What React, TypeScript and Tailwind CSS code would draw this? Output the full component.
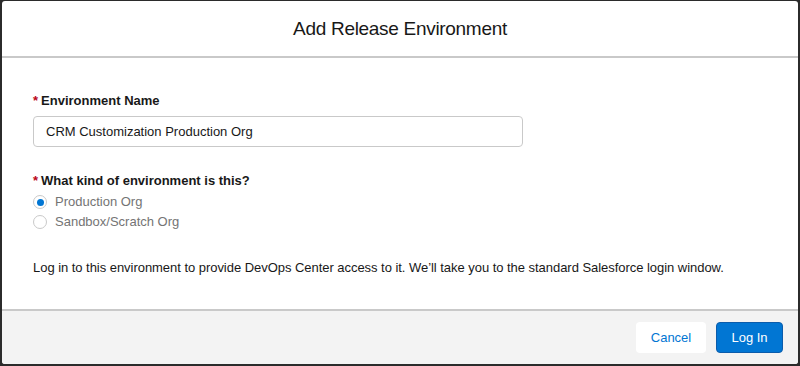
import { useState } from 'react';

const options = ['Production Org', 'Sandbox/Scratch Org'];

function Radio({ label, checked, onSelect }: { label: string; checked: boolean; onSelect: () => void }) {
  return (
    <label className="flex items-center gap-2 h-5 cursor-pointer" onClick={onSelect}>
      <span className="flex h-[14px] w-[14px] items-center justify-center rounded-full border border-[#c9c9c9] bg-white">
        {checked && <span className="block h-[7px] w-[7px] rounded-full bg-[#0176d3]" />}
      </span>
      <span className="text-[13px] text-[#747474]">{label}</span>
    </label>
  );
}

export default function App() {
  const [kind, setKind] = useState(0);
  const [name, setName] = useState('CRM Customization Production Org');

  return (
    <div className="h-[366px] w-[800px] bg-[#2b2b2b] pt-px pl-[2px] pr-[2px] pb-[2px] font-['Liberation_Sans',Arial,sans-serif] text-[#181818]">
      <div className="flex h-full flex-col overflow-hidden rounded-[3px] bg-white">
        <header className="flex h-[57px] items-center justify-center border-b-2 border-[#c9c9c9] pt-[2px]">
          <h1 className="text-[19px] tracking-[-0.3px]">Add Release Environment</h1>
        </header>

        <main className="flex-1 px-[31px] pt-[35px]">
          <div className="text-[13px] font-bold leading-4">
            <abbr className="mr-[3px] text-[#ba0517] no-underline">*</abbr>Environment Name
          </div>
          <input
            value={name}
            onChange={(e) => setName(e.target.value)}
            className="mt-[7px] h-[31px] w-[490px] rounded-[4px] border border-[#c9c9c9] px-3 text-[13px] text-[#181818] outline-none"
          />

          <div className="mt-[26px] text-[13px] font-bold leading-4">
            <abbr className="mr-[3px] text-[#ba0517] no-underline">*</abbr>What kind of environment is this?
          </div>
          <div className="mt-[3px] flex flex-col">
            {options.map((o, i) => (
              <Radio key={o} label={o} checked={kind === i} onSelect={() => setKind(i)} />
            ))}
          </div>

          <p className="mt-[26px] text-[13px] leading-5 tracking-[-0.04px]">
            Log in to this environment to provide DevOps Center access to it. We’ll take you to the standard Salesforce login window.
          </p>
        </main>

        <footer className="flex h-[55px] items-center justify-end gap-[10px] border-t-2 border-[#c9c9c9] bg-[#f3f3f3] pr-[15px]">
          <button className="h-[31px] w-[70px] rounded-[4px] bg-white text-[13px] text-[#0176d3]">Cancel</button>
          <button className="h-[31px] w-[67px] rounded-[4px] border border-[#0b5cab] bg-[#0176d3] text-[13px] text-white">Log In</button>
        </footer>
      </div>
    </div>
  );
}
